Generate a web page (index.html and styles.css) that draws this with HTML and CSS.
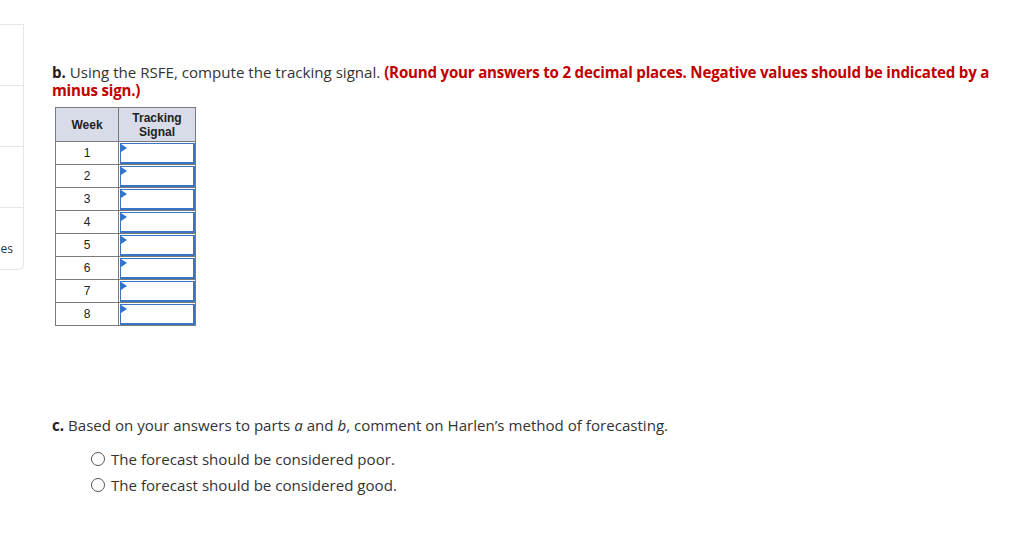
FILE: index.html
```html
<!DOCTYPE html>
<html>
<head>
<meta charset="utf-8">
<link rel="stylesheet" href="styles.css">
</head>
<body>
<div class="page">
  <aside class="side">
    <div class="side-item"></div>
    <div class="side-item"></div>
    <div class="side-item"></div>
    <div class="side-item last"><span class="side-text">es</span></div>
  </aside>
  <main class="content">
    <p class="q"><b>b.</b> Using the RSFE, compute the tracking signal. <span class="note">(Round your answers to 2 decimal places. Negative values should be indicated by a minus sign.)</span></p>
    <table class="grid">
      <thead>
        <tr><th class="c-week">Week</th><th class="c-sig">Tracking<br>Signal</th></tr>
      </thead>
      <tbody>
        <tr><td>1</td><td class="inp"><span class="box"><span class="tri"></span></span></td></tr>
        <tr><td>2</td><td class="inp"><span class="box"><span class="tri"></span></span></td></tr>
        <tr><td>3</td><td class="inp"><span class="box"><span class="tri"></span></span></td></tr>
        <tr><td>4</td><td class="inp"><span class="box"><span class="tri"></span></span></td></tr>
        <tr><td>5</td><td class="inp"><span class="box"><span class="tri"></span></span></td></tr>
        <tr><td>6</td><td class="inp"><span class="box"><span class="tri"></span></span></td></tr>
        <tr><td>7</td><td class="inp"><span class="box"><span class="tri"></span></span></td></tr>
        <tr><td>8</td><td class="inp"><span class="box"><span class="tri"></span></span></td></tr>
      </tbody>
    </table>
    <p class="q qc"><b>c.</b> Based on your answers to parts <i>a</i> and <i>b</i>, comment on Harlen’s method of forecasting.</p>
    <ul class="opts">
      <li><span class="radio"></span>The forecast should be considered poor.</li>
      <li><span class="radio"></span>The forecast should be considered good.</li>
    </ul>
  </main>
</div>
</body>
</html>
```

FILE: styles.css
```css
* { box-sizing: border-box; }
html, body { margin: 0; padding: 0; background: #fff; }
body { font-family: "Open Sans", "Liberation Sans", sans-serif; color: #333; }
.page { display: flex; align-items: flex-start; width: 1014px; height: 540px; overflow: hidden; }
.side {
  width: 24px; margin-top: 24px; flex: none;
  border: 1px solid #e6e6e6; border-left: none;
  border-radius: 0 0 6px 0;
  display: flex; flex-direction: column;
}
.side-item { height: 61px; border-bottom: 1px solid #e6e6e6; position: relative; }
.side-item.last { border-bottom: none; height: 61px; }
.side-text { position: absolute; right: 10px; top: 33px; font-size: 12px; color: #333; line-height: 16px; }
.content { padding-left: 28px; padding-top: 63px; flex: 1; }
.q { margin: 0; font-size: 15.1px; line-height: 18px; width: 945px; }
.q b { font-weight: 700; color: #222; }
.note { color: #c00000; font-weight: 700; letter-spacing: -0.2px; }
.grid {
  border-collapse: collapse; margin: 8px 0 0 3px;
  font-family: "Liberation Sans", Arial, sans-serif; font-size: 12px; color: #222;
}
.grid th, .grid td { border: 1px solid #7a7a7a; padding: 0; }
.grid th { background: #d8dce8; font-weight: 700; height: 34px; line-height: 14px; text-align: center; }
.c-week { width: 63px; }
.c-sig { width: 77px; padding-top: 1px; }
.grid td { height: 23px; text-align: center; line-height: 14px; }
.grid td.inp { padding: 1px 0 0 1px; }
.box { display: block; height: 21px; border-style: solid; border-width: 1px 2px 2px 1px; position: relative; border-color: #3a74c4; }
.tri { position: absolute; left: 0; top: 0; width: 0; height: 0; border-top: 4px solid transparent; border-bottom: 4px solid transparent; border-left: 6px solid #2f74d0; }
.qc { margin-top: 90px; }
.opts { list-style: none; margin: 12px 0 0 39px; padding: 0; font-size: 15.1px; color: #333; }
.opts li { display: flex; align-items: center; height: 26px; }
.radio { width: 14px; height: 14px; border: 1px solid #555; border-radius: 50%; margin-right: 6px; flex: none; }
```
